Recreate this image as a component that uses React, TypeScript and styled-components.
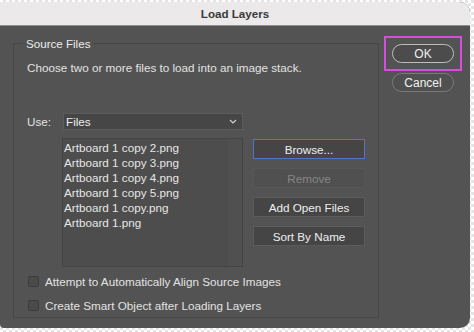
import React, { useState } from 'react';
import styled, { createGlobalStyle } from 'styled-components';

const GlobalStyle = createGlobalStyle`
  html, body {
    margin: 0;
    padding: 0;
    width: 474px;
    height: 332px;
    overflow: hidden;
    background-color: #ffffff;
    background-image:
      linear-gradient(45deg, #e4e4e4 25%, transparent 25%, transparent 75%, #e4e4e4 75%),
      linear-gradient(45deg, #e4e4e4 25%, transparent 25%, transparent 75%, #e4e4e4 75%);
    background-size: 6px 6px;
    background-position: 0 0, 3px 3px;
    font-family: "Liberation Sans", Arial, sans-serif;
  }
`;

const Window = styled.div`
  margin-top: 2px;
  width: 470px;
  height: 326px;
  border-radius: 0 10px 10px 4px;
  overflow: hidden;
  background: #535353;
  display: flex;
  flex-direction: column;
`;

const TitleBar = styled.div`
  height: 23px;
  flex-shrink: 0;
  background: #ebe9e9;
  border-bottom: 1px solid #8f8d8d;
  display: flex;
  align-items: center;
  justify-content: center;
  font-size: 11.6px;
  font-weight: bold;
  color: #3a3a3a;
`;

const Body = styled.div`
  flex: 1;
  display: flex;
  padding: 10px 0 0 13px;
  gap: 5px;
`;

const Group = styled.fieldset`
  margin: 0;
  width: 366px;
  height: 282px;
  box-sizing: border-box;
  border: 1px solid #464646;
  padding: 0 13px 0 13px;
  display: flex;
  flex-direction: column;
  min-width: 0;
`;

const Legend = styled.legend`
  padding: 0 3px;
  margin-left: -4px;
  font-size: 11.6px;
  line-height: 15px;
  color: #ececec;
`;

const Description = styled.div`
  margin-top: 9px;
  font-size: 11.7px;
  line-height: 16px;
  color: #e2e2e2;
`;

const UseRow = styled.div`
  margin-top: 37px;
  display: flex;
  align-items: center;
  height: 17px;
`;

const Label = styled.span`
  width: 36px;
  font-size: 11.7px;
  color: #e2e2e2;
`;

const Select = styled.div`
  width: 180px;
  height: 17px;
  box-sizing: border-box;
  background: #464646;
  border: 1px solid #5c5c5c;
  display: flex;
  align-items: center;
  justify-content: space-between;
  padding: 0 5px 0 2px;
  font-size: 11.7px;
  color: #ededed;
`;

const ListRow = styled.div`
  margin-top: 8px;
  display: flex;
  align-items: flex-start;
  gap: 10px;
  padding-left: 35px;
`;

const FileList = styled.div`
  width: 182px;
  height: 129px;
  box-sizing: border-box;
  background: #4d4d4d;
  border: 1px solid #444444;
  display: flex;
`;

const FileItems = styled.div`
  flex: 1;
  padding: 1px 0 0 1px;
  display: flex;
  flex-direction: column;
`;

const ScrollGutter = styled.div`
  width: 14px;
  background: #505050;
`;

const FileItem = styled.div`
  font-size: 11.7px;
  line-height: 15px;
  color: #e6e6e6;
  white-space: nowrap;
`;

const ActionColumn = styled.div`
  display: flex;
  flex-direction: column;
  gap: 9px;
  padding-top: 1px;
`;

const ActionButton = styled.div<{ $focused?: boolean; $disabled?: boolean }>`
  width: 112px;
  height: 20px;
  box-sizing: border-box;
  display: flex;
  align-items: center;
  justify-content: center;
  font-size: 11.7px;
  background: ${(p) => (p.$disabled ? '#505050' : '#454545')};
  color: ${(p) => (p.$disabled ? '#868686' : '#eeeeee')};
  border: 1px solid ${(p) => (p.$focused ? '#5274c8' : p.$disabled ? '#575757' : '#5b5b5b')};
`;

const CheckRow = styled.label<{ $gap: number }>`
  display: flex;
  align-items: center;
  gap: 6px;
  height: 17px;
  margin-top: ${(p) => p.$gap}px;
  padding-left: 1px;
  font-size: 11.7px;
  color: #e2e2e2;
`;

const CheckBox = styled.span`
  width: 11px;
  height: 11px;
  box-sizing: border-box;
  background: #4a4a4a;
  border: 1px solid #3c3c3c;
  border-radius: 2px;
`;

const SideColumn = styled.div`
  display: flex;
  flex-direction: column;
  align-items: center;
  width: 78px;
  gap: 2px;
`;

const Highlight = styled.div`
  width: 78px;
  height: 35px;
  box-sizing: border-box;
  border: 2px solid #d94bde;
  display: flex;
  align-items: center;
  justify-content: center;
`;

const PillButton = styled.div`
  width: 62px;
  height: 19px;
  box-sizing: border-box;
  border: 1px solid #bdbdbd;
  border-radius: 10px;
  background: #4c4c4c;
  display: flex;
  align-items: center;
  justify-content: center;
  font-size: 12px;
  color: #f0f0f0;
`;

const CancelButton = styled(PillButton)`
  border-color: #7a7a7a;
  background: #505050;
`;

const files = [
  'Artboard 1 copy 2.png',
  'Artboard 1 copy 3.png',
  'Artboard 1 copy 4.png',
  'Artboard 1 copy 5.png',
  'Artboard 1 copy.png',
  'Artboard 1.png',
];

const Chevron = () => (
  <svg width="8" height="5" viewBox="0 0 8 5">
    <path d="M1 1 L4 4 L7 1" stroke="#cfcfcf" strokeWidth="1.2" fill="none" />
  </svg>
);

export default function App() {
  const [source] = useState('Files');

  return (
    <>
      <GlobalStyle />
      <Window>
        <TitleBar>Load Layers</TitleBar>
        <Body>
          <Group>
            <Legend>Source Files</Legend>
            <Description>Choose two or more files to load into an image stack.</Description>
            <UseRow>
              <Label>Use:</Label>
              <Select>
                {source}
                <Chevron />
              </Select>
            </UseRow>
            <ListRow>
              <FileList>
                <FileItems>
                  {files.map((f) => (
                    <FileItem key={f}>{f}</FileItem>
                  ))}
                </FileItems>
                <ScrollGutter />
              </FileList>
              <ActionColumn>
                <ActionButton $focused>Browse...</ActionButton>
                <ActionButton $disabled>Remove</ActionButton>
                <ActionButton>Add Open Files</ActionButton>
                <ActionButton>Sort By Name</ActionButton>
              </ActionColumn>
            </ListRow>
            <CheckRow $gap={6}>
              <CheckBox />
              Attempt to Automatically Align Source Images
            </CheckRow>
            <CheckRow $gap={7}>
              <CheckBox />
              Create Smart Object after Loading Layers
            </CheckRow>
          </Group>
          <SideColumn>
            <Highlight>
              <PillButton>OK</PillButton>
            </Highlight>
            <CancelButton>Cancel</CancelButton>
          </SideColumn>
        </Body>
      </Window>
    </>
  );
}
